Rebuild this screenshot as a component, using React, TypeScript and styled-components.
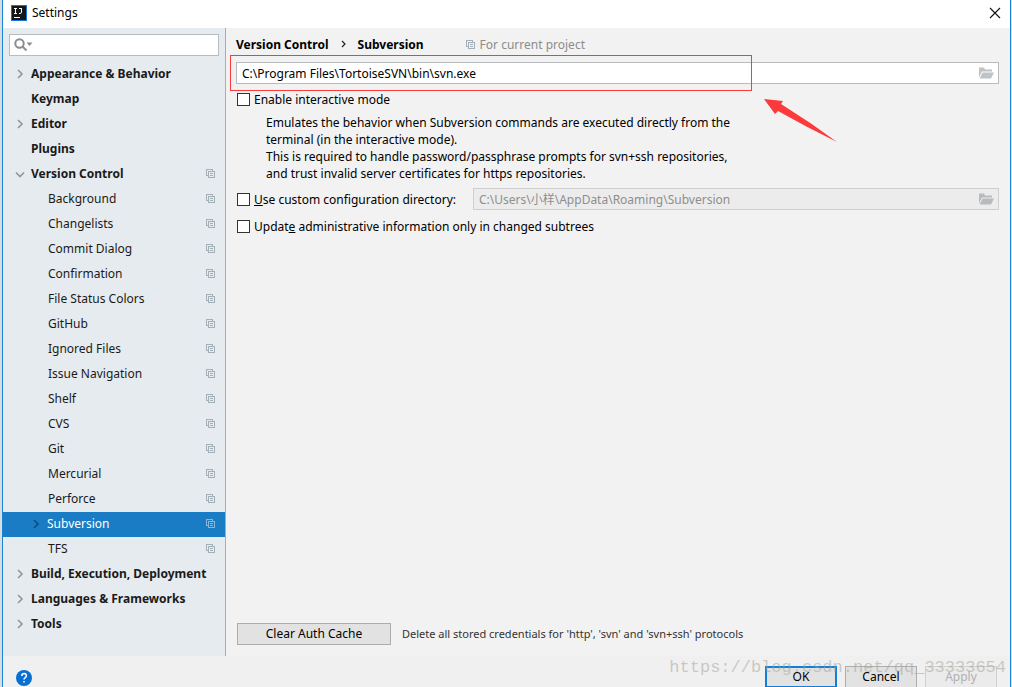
import React from 'react';
import styled, { createGlobalStyle, css } from 'styled-components';

const Global = createGlobalStyle`
  *, *::before, *::after { box-sizing: border-box; }
  body { margin: 0; overflow: hidden; background: #d9dde0; }
  body, button, input {
    font-family: "Noto Sans", "Noto Sans CJK SC", sans-serif;
    font-size: 12px;
    color: #000;
  }
`;

const Window = styled.div`
  display: flex;
  flex-direction: column;
  height: 100vh;
  margin: 0 1px 0 2px;
  border: solid #1883d7;
  border-width: 0 1px;
  background: #f0f0f0;
`;

const TitleBar = styled.header`
  display: flex;
  align-items: center;
  flex: none;
  height: 28px;
  padding: 0 9px 3px 8px;
  gap: 5px;
  background: #fff;
`;

const Title = styled.h1`
  flex: 1;
  margin: 0;
  font-size: 12px;
  line-height: 20px;
  font-weight: 400;
`;

const IconButton = styled.button`
  display: flex;
  flex: none;
  padding: 0;
  border: 0;
  background: none;
`;

const Body = styled.div`
  display: flex;
  flex: 1;
  min-height: 0;
`;

const Sidebar = styled.aside`
  flex: none;
  width: 223px;
  border-right: 1px solid #a9adb0;
  background: #e6ebef;
`;

const Search = styled.label`
  display: flex;
  align-items: center;
  height: 22px;
  margin: 6px 6px;
  padding-left: 4px;
  border: 1px solid #b9bcbf;
  background: #fff;
`;

const TextInput = styled.input`
  flex: 1;
  min-width: 0;
  height: 20px;
  padding: 0 5px;
  border: 0;
  outline: 0;
  background: none;
  &:disabled { color: #8e8e8e; }
`;

const Tree = styled.ul`
  margin: 0;
  padding: 0;
  list-style: none;
`;

const TreeRow = styled.li<{ $child?: boolean; $selected?: boolean; $bold?: boolean }>`
  display: flex;
  align-items: center;
  height: 25px;
  padding: 0 9px 2px ${p => (p.$child ? 29 : 12)}px;
  color: #1a1a1a;
  font-weight: ${p => (p.$bold ? 700 : 400)};
  ${p => p.$selected && css`
    padding-left: 28px;
    background: #1a7cc4;
    color: #fff;
  `}
`;

const Twisty = styled.span`
  display: flex;
  flex: none;
  width: 16px;
`;

const RowLabel = styled.span`
  flex: 1;
  white-space: nowrap;
`;

const Content = styled.main`
  display: flex;
  flex-direction: column;
  flex: 1;
  min-width: 0;
  padding: 5px 11px 11px 10px;
  background: #f2f2f2;
`;

const Breadcrumb = styled.h2`
  display: flex;
  align-items: center;
  height: 22px;
  margin: 0 0 7px;
  gap: 12px;
  font-size: 12px;
`;

const Scope = styled.span`
  display: flex;
  align-items: center;
  gap: 4px;
  margin-left: 29px;
  color: #8c8c8c;
  font-weight: 400;
`;

const FieldArea = styled.div`
  position: relative;
  display: flex;
`;

const PathField = styled.div<{ $disabled?: boolean }>`
  display: flex;
  align-items: center;
  flex: 1;
  height: 22px;
  padding-right: 4px;
  border: 1px solid ${p => (p.$disabled ? '#cfcfcf' : '#b9bcbf')};
  background: ${p => (p.$disabled ? '#ececec' : '#fff')};
`;

const Highlight = styled.div`
  position: absolute;
  top: -7px;
  left: -6px;
  width: 522px;
  height: 36px;
  border: 1px solid #fb3b3b;
  pointer-events: none;
`;

const Pointer = styled.svg`
  position: absolute;
  top: 36px;
  left: 528px;
  pointer-events: none;
`;

const OptionRow = styled.div`
  display: flex;
  align-items: center;
  min-height: 22px;
  gap: 17px;
`;

const CheckLabel = styled.label`
  display: flex;
  align-items: center;
  gap: 4px;
  padding-left: 1px;
  white-space: nowrap;
`;

const Checkbox = styled.input`
  appearance: none;
  width: 13px;
  height: 13px;
  margin: 0;
  border: 1px solid #333;
  background: #fff;
`;

const Options = styled.section`
  display: flex;
  flex-direction: column;
  padding-top: 4px;
`;

const Description = styled.p`
  margin: 4px 0 6px 30px;
  line-height: 17px;
`;

const CustomDirectory = styled(OptionRow)`
  margin-bottom: 5px;
`;

const Underlined = styled.span`
  text-decoration: underline;
`;

const CacheRow = styled.div`
  display: flex;
  align-items: center;
  gap: 11px;
  margin-top: auto;
  padding-left: 1px;
  color: #333;
  font-size: 11px;
  line-height: 20px;
`;

const Button = styled.button<{ $primary?: boolean; $wide?: boolean }>`
  flex: none;
  width: ${p => (p.$wide ? 154 : 72)}px;
  height: 22px;
  padding: 0;
  border: ${p => (p.$primary ? '2px solid #0f7fd9' : '1px solid #adadad')};
  background: #e2e2e2;
  line-height: 18px;
  &:disabled {
    border-color: #d0d0d0;
    background: #ebebeb;
    color: #b0b0b0;
  }
`;

const Footer = styled.footer`
  position: relative;
  display: flex;
  flex: none;
  height: 31px;
  padding: 10px 13px 0;
  gap: 8px;
  overflow: hidden;
`;

const HelpButton = styled(IconButton)`
  margin: 4px auto 0 0;
`;

const Watermark = styled.span`
  position: absolute;
  top: 0;
  right: 4px;
  color: rgba(160, 160, 150, 0.5);
  font-family: "Liberation Mono", monospace;
  font-size: 17px;
  line-height: 24px;
  pointer-events: none;
`;

const CopyIcon = ({ color = '#a4b0b8' }: { color?: string }) => (
  <svg width="11" height="11" viewBox="0 0 11 11" fill="none" stroke={color} shapeRendering="crispEdges">
    <path d="M2.5 7.5h-1v-6h6v1M3.5 3.5h6v6h-6zM5 5.5h3M5 7.5h3" />
  </svg>
);

const Chevron = ({ open, selected }: { open?: boolean; selected?: boolean }) => (
  <svg width="10" height="10" viewBox="0 0 10 10" fill="none" stroke={selected ? '#0f4d7c' : '#919699'} strokeWidth="1.6">
    <path d={open ? 'M1 3.5l4 4 4-4' : 'M3 1l4 4-4 4'} />
  </svg>
);

const FolderIcon = ({ color = '#bdc3c7' }: { color?: string }) => (
  <svg width="15" height="12" viewBox="0 0 15 12" fill={color}>
    <path d="M0 0.500H5L6 2.500H13V4.500H3L0 10.500z" />
    <path d="M3.600 5.500H15L12 11.500H0.600z" />
  </svg>
);

const AppIcon = () => (
  <svg width="16" height="16" viewBox="0 0 16 16">
    <rect width="16" height="16" fill="#1673e6" />
    <rect x="1" y="1" width="14" height="14" fill="#161616" />
    <path d="M3 3.500h3M4.500 3.500v5M3 8.500h3M8 3.500h3M10.500 3.500v3.500q0 1.500-1.500 1.500H8M3 12.500h6" stroke="#fff" fill="none" />
  </svg>
);

const groups = [
  { label: 'Appearance & Behavior', arrow: true },
  { label: 'Keymap' },
  { label: 'Editor', arrow: true },
  { label: 'Plugins' },
  { label: 'Version Control', arrow: true, open: true },
];

const children = [
  'Background', 'Changelists', 'Commit Dialog', 'Confirmation', 'File Status Colors', 'GitHub',
  'Ignored Files', 'Issue Navigation', 'Shelf', 'CVS', 'Git', 'Mercurial', 'Perforce', 'Subversion', 'TFS',
];

const tail = ['Build, Execution, Deployment', 'Languages & Frameworks', 'Tools'];

export default function App() {
  return (
    <>
      <Global />
      <Window>
        <TitleBar>
          <AppIcon />
          <Title>Settings</Title>
          <IconButton aria-label="Close">
            <svg width="12" height="12" viewBox="0 0 12 12" stroke="#111" strokeWidth="1.1">
              <path d="M1 1l10 10M11 1L1 11" />
            </svg>
          </IconButton>
        </TitleBar>
        <Body>
          <Sidebar>
            <Search>
              <svg width="19" height="14" viewBox="0 0 19 14" fill="none" stroke="#8c8c8c" strokeWidth="2">
                <circle cx="5.500" cy="5.500" r="4.200" />
                <path d="M8.500 8.500l4 4" />
                <path d="M12.500 4.500h6l-3 3.500z" fill="#8c8c8c" stroke="none" />
              </svg>
              <TextInput aria-label="Search settings" />
            </Search>
            <Tree>
              {groups.map(g => (
                <TreeRow key={g.label} $bold>
                  <Twisty>{g.arrow && <Chevron open={g.open} />}</Twisty>
                  <RowLabel>{g.label}</RowLabel>
                  {g.open && <CopyIcon />}
                </TreeRow>
              ))}
              {children.map(label => {
                const selected = label === 'Subversion';
                return (
                  <TreeRow key={label} $child $selected={selected}>
                    <Twisty>{selected && <Chevron selected />}</Twisty>
                    <RowLabel>{label}</RowLabel>
                    <CopyIcon color={selected ? '#8fb4d0' : undefined} />
                  </TreeRow>
                );
              })}
              {tail.map(label => (
                <TreeRow key={label} $bold>
                  <Twisty><Chevron /></Twisty>
                  <RowLabel>{label}</RowLabel>
                </TreeRow>
              ))}
            </Tree>
          </Sidebar>
          <Content>
            <Breadcrumb>
              <span>Version Control</span>
              <svg width="5" height="8" viewBox="0 0 5 8" fill="none" stroke="#222" strokeWidth="1.2">
                <path d="M1 1l3 3-3 3" />
              </svg>
              <span>Subversion</span>
              <Scope><CopyIcon />For current project</Scope>
            </Breadcrumb>
            <FieldArea>
              <PathField>
                <TextInput aria-label="Subversion executable" defaultValue="C:\Program Files\TortoiseSVN\bin\svn.exe" />
                <FolderIcon />
              </PathField>
              <Highlight />
              <Pointer width="74" height="45" viewBox="0 0 74 45">
                <path d="M0 1L19 3 17 6Q46 24 73 44 44 30 14 13L11 16z" fill="#fd3a3a" />
              </Pointer>
            </FieldArea>
            <Options>
              <OptionRow>
                <CheckLabel><Checkbox type="checkbox" />Enable interactive mode</CheckLabel>
              </OptionRow>
              <Description>
                Emulates the behavior when Subversion commands are executed directly from the<br />
                terminal (in the interactive mode).<br />
                This is required to handle password/passphrase prompts for svn+ssh repositories,<br />
                and trust invalid server certificates for https repositories.
              </Description>
              <CustomDirectory>
                <CheckLabel>
                  <Checkbox type="checkbox" />
                  <span><Underlined>U</Underlined>se custom configuration directory:</span>
                </CheckLabel>
                <PathField $disabled>
                  <TextInput disabled aria-label="Configuration directory" defaultValue="C:\Users\小样\AppData\Roaming\Subversion" />
                  <FolderIcon color="#b7bbbe" />
                </PathField>
              </CustomDirectory>
              <OptionRow>
                <CheckLabel>
                  <Checkbox type="checkbox" />
                  <span>Updat<Underlined>e</Underlined> administrative information only in changed subtrees</span>
                </CheckLabel>
              </OptionRow>
            </Options>
            <CacheRow>
              <Button $wide>Clear Auth Cache</Button>
              <span>Delete all stored credentials for 'http', 'svn' and 'svn+ssh' protocols</span>
            </CacheRow>
          </Content>
        </Body>
        <Footer>
          <HelpButton aria-label="Help">
            <svg width="16" height="16" viewBox="0 0 16 16" fill="none">
              <circle cx="8" cy="8" r="8" fill="#0a6fd3" />
              <path d="M5.800 6q0-2.400 2.300-2.400T10.300 5.800Q10.300 7 9 7.800 8 8.500 8 9.500M8 11v1.600" stroke="#fff" strokeWidth="1.5" />
            </svg>
          </HelpButton>
          <Button $primary>OK</Button>
          <Button>Cancel</Button>
          <Button disabled>Apply</Button>
          <Watermark>https://blog.csdn.net/qq_33333654</Watermark>
        </Footer>
      </Window>
    </>
  );
}
